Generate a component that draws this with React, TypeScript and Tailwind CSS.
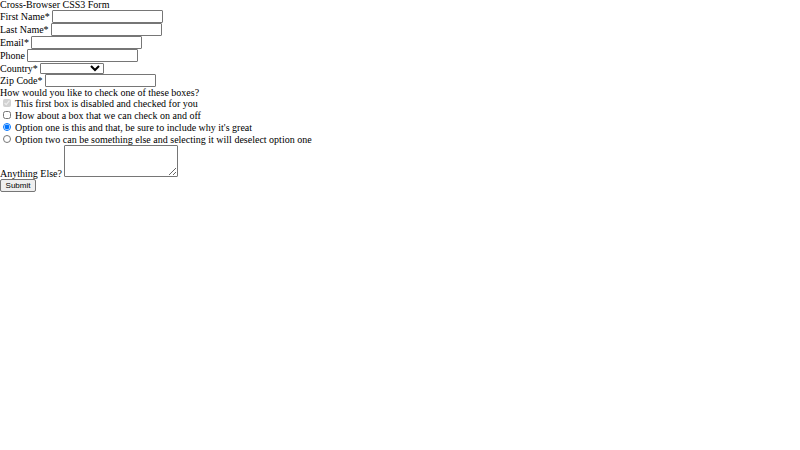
import React from 'react';

const serif = 'font-["Liberation_Serif",serif]';

type FieldProps = {
    label: string;
    children: React.ReactNode;
};

const Field = ({ label, children }: FieldProps) => (
    <label className="flex items-end h-[13px] leading-[11px]">
        <span className="pb-[1px]">{label}</span>
        {children}
    </label>
);

const textInput = 'w-[111px] h-[13px] ml-[2px] border border-[#767676] rounded-[1px] bg-white px-[1px] text-[10px] outline-none';
const tick = 'w-[8px] h-[8px] ml-[3px] mr-[4px]';

export default function App() {
    return (
        <form className={`${serif} text-[10px] leading-[11px] text-black bg-white w-[800px] h-[450px]`}>
            <div className="h-[10px] leading-[10px]">Cross-Browser CSS3 Form</div>
            <Field label="First Name*">
                <input type="text" className={textInput} />
            </Field>
            <Field label="Last Name*">
                <input type="text" className={textInput} />
            </Field>
            <Field label="Email*">
                <input type="email" className={textInput} />
            </Field>
            <Field label="Phone">
                <input type="tel" className={textInput} />
            </Field>
            <label className="flex items-end h-[12px] leading-[11px]">
                <span>Country*</span>
                <select className="w-[64px] h-[11px] ml-[2px] border border-[#767676] rounded-[1px] bg-white text-[8px]">
                    <option value=""></option>
                    <option value="us">United States</option>
                    <option value="ca">Canada</option>
                </select>
            </label>
            <Field label="Zip Code*">
                <input type="text" className={textInput} />
            </Field>
            <div className="h-[10px] leading-[10px] pt-[1px]">How would you like to check one of these boxes?</div>
            <div className="flex flex-col">
                <label className="flex items-center h-[12px]">
                    <input type="checkbox" checked disabled readOnly className={tick} />
                    <span>This first box is disabled and checked for you</span>
                </label>
                <label className="flex items-center h-[12px]">
                    <input type="checkbox" className={tick} />
                    <span>How about a box that we can check on and off</span>
                </label>
                <label className="flex items-center h-[12px]">
                    <input type="radio" name="opt" defaultChecked className={tick} />
                    <span>Option one is this and that, be sure to include why it's great</span>
                </label>
                <label className="flex items-center h-[12px]">
                    <input type="radio" name="opt" className={tick} />
                    <span>Option two can be something else and selecting it will deselect option one</span>
                </label>
            </div>
            <label className="flex items-end">
                <span className="-mb-[2px]">Anything Else?</span>
                <textarea className="w-[114px] h-[32px] ml-[2px] border border-[#767676] rounded-[1px] bg-white text-[8px]" />
            </label>
            <button type="submit" className='mt-[2px] block font-["Liberation_Sans",sans-serif] text-[8px] leading-[9px] h-[13px] w-[36px] bg-[#efefef] border border-[#767676] rounded-[2px]'>
                Submit
            </button>
        </form>
    );
}
